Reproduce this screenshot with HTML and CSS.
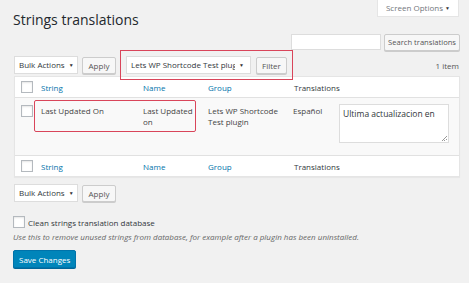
FILE: index.html
```html
<!DOCTYPE html>
<html>
<head>
<meta charset="utf-8">
<link rel="stylesheet" href="styles.css">
</head>
<body>
<div class="page">
  <div class="screen-meta">
    <div class="screen-options">Screen Options <span class="caret">▼</span></div>
  </div>
  <h1 class="title">Strings translations</h1>
  <div class="search-box">
    <div class="search-input"></div>
    <div class="btn">Search translations</div>
  </div>
  <div class="tablenav top">
    <div class="actions">
      <div class="select bulk">Bulk Actions <span class="caret">▼</span></div>
      <div class="btn">Apply</div>
      <div class="filter-group">
        <div class="select group-select"><span class="sel-text">Lets WP Shortcode Test plugin</span> <span class="caret">▼</span></div>
        <div class="btn">Filter</div>
      </div>
    </div>
    <div class="count">1 item</div>
  </div>
  <div class="table">
    <div class="row head">
      <div class="c-cb"><span class="cb"></span></div>
      <div class="c-string link">String</div>
      <div class="c-name link">Name</div>
      <div class="c-group link">Group</div>
      <div class="c-trans">Translations</div>
    </div>
    <div class="row body">
      <div class="c-cb"><span class="cb"></span></div>
      <div class="c-string">Last Updated On</div>
      <div class="c-name">Last Updated on</div>
      <div class="c-group">Lets WP Shortcode Test plugin</div>
      <div class="c-trans trans-cell">
        <span class="lang">Español</span>
        <div class="textarea">Ultima actualizacion en<span class="grip"></span></div>
      </div>
      <div class="row-mark"></div>
    </div>
    <div class="row foot">
      <div class="c-cb"><span class="cb"></span></div>
      <div class="c-string link">String</div>
      <div class="c-name link">Name</div>
      <div class="c-group link">Group</div>
      <div class="c-trans">Translations</div>
    </div>
  </div>
  <div class="tablenav bottom">
    <div class="actions">
      <div class="select bulk">Bulk Actions <span class="caret">▼</span></div>
      <div class="btn">Apply</div>
    </div>
  </div>
  <label class="clean"><span class="cb"></span>Clean strings translation database</label>
  <p class="desc">Use this to remove unused strings from database, for example after a plugin has been uninstalled.</p>
  <div class="primary">Save Changes</div>
</div>
</body>
</html>
```

FILE: styles.css
```css
html, body {
  margin: 0;
  padding: 0;
  background: #fff;
}
body {
  width: 474px;
  height: 287px;
  overflow: hidden;
  font-family: "Open Sans", sans-serif;
  font-size: 8px;
  color: #444;
}
.page {
  width: 469px;
  height: 283px;
  background: #f1f1f1;
  box-sizing: border-box;
  padding: 0 9px 0 13px;
}
.screen-meta {
  float: right;
  margin-right: 1px;
}
.screen-options {
  width: 82px;
  height: 17px;
  box-sizing: border-box;
  background: #fff;
  border: 1px solid #e5e5e5;
  border-top: 0;
  font-size: 8px;
  line-height: 16px;
  text-align: center;
  color: #72777c;
}
.caret {
  font-size: 5px;
  vertical-align: 1px;
  color: #333;
}
.title {
  margin: 0;
  padding-top: 9px;
  font-size: 14px;
  font-weight: 400;
  line-height: 22px;
  color: #23282d;
  height: 22px;
}
.search-box {
  clear: both;
  display: flex;
  justify-content: flex-end;
  gap: 3px;
  margin-top: 3px;
  height: 17px;
}
.search-input {
  width: 90px;
  height: 16px;
  background: #fff;
  border: 1px solid #ddd;
  box-sizing: border-box;
}
.btn {
  height: 17px;
  box-sizing: border-box;
  border: 1px solid #ccc;
  background: #f7f7f7;
  color: #555;
  padding: 0 5px;
  line-height: 15px;
  border-radius: 2px;
  box-shadow: 0 1px 0 #ccc;
  white-space: nowrap;
}
.search-box .btn {
  padding: 0 3px;
  font-size: 7.6px;
}
.tablenav {
  display: flex;
  justify-content: space-between;
  align-items: center;
}
.tablenav.top {
  margin-top: 5px;
  height: 18px;
}
.actions {
  display: flex;
  align-items: center;
  gap: 4px;
  padding-left: 1px;
}
.actions > .btn { width: 34px; text-align: center; padding: 0; }
.select {
  height: 18px;
  box-sizing: border-box;
  border: 1px solid #ddd;
  background: #fff;
  color: #32373c;
  line-height: 16px;
  padding: 0 4px;
  white-space: nowrap;
  display: flex;
  gap: 4px;
}
.bulk { width: 64px; }
.filter-group {
  display: flex;
  align-items: center;
  gap: 5px;
  margin-left: 6px;
  outline: 1.5px solid #d9455a;
  outline-offset: 5px;
}
.filter-group .btn { width: auto; padding: 0 5px; }
.group-select {
  width: 125px;
}
.sel-text {
  display: block;
  width: 104px;
  overflow: hidden;
}
.count {
  color: #555;
  padding-right: 1px;
}
.table {
  margin-top: 2px;
  margin-left: 1px;
  background: #fff;
  border: 1px solid #e5e5e5;
  box-shadow: 0 1px 1px rgba(0,0,0,.04);
}
.row {
  display: flex;
  position: relative;
}
.row.head, .row.foot {
  height: 20px;
  align-items: center;
}
.row.head { border-bottom: 1px solid #e1e1e1; }
.row.foot { border-top: 1px solid #e1e1e1; }
.row.body {
  background: #f9f9f9;
  height: 57px;
  align-items: flex-start;
  line-height: 11px;
  padding-top: 7px;
  box-sizing: border-box;
}
.c-cb { width: 22px; padding-left: 6px; box-sizing: border-box; }
.c-string { width: 102px; padding-left: 4px; box-sizing: border-box; }
.c-name { width: 65px; padding-left: 4px; padding-right: 6px; box-sizing: border-box; }
.c-group { width: 85px; padding-left: 4px; padding-right: 6px; box-sizing: border-box; }
.c-trans { flex: 1; padding-left: 5px; }
.row.body .c-cb { margin-top: -1px; }
.link { color: #0073aa; }
.row.head .c-trans, .row.foot .c-trans { color: #32373c; }
.cb {
  display: inline-block;
  width: 12px;
  height: 12px;
  box-sizing: border-box;
  border: 1px solid #b4b9be;
  background: #fff;
  vertical-align: middle;
  box-shadow: inset 0 1px 2px rgba(0,0,0,.1);
}
.trans-cell {
  display: flex;
  gap: 0;
  padding-left: 4px;
}
.lang { width: 46px; }
.textarea {
  position: relative;
  width: 110px;
  height: 39px;
  margin-top: -1px;
  box-sizing: border-box;
  border: 1px solid #ddd;
  background: #fff;
  color: #32373c;
  padding: 3px 3px;
  font-size: 8.5px;
}
.grip {
  position: absolute;
  right: 1px;
  bottom: 1px;
  width: 5px;
  height: 5px;
  background: linear-gradient(135deg, transparent 45%, #999 45%, #999 55%, transparent 55%, transparent 70%, #999 70%, #999 80%, transparent 80%);
}
.row-mark {
  position: absolute;
  left: 19px;
  top: 2px;
  width: 162px;
  height: 32px;
  box-sizing: border-box;
  border: 1.5px solid #d9455a;
  border-radius: 2px;
}
.tablenav.bottom {
  margin-top: 7px;
  height: 18px;
}
.clean {
  display: flex;
  align-items: center;
  gap: 3px;
  margin-top: 14px;
  color: #32373c;
  height: 12px;
}
.desc {
  margin: 3px 0 0;
  font-style: italic;
  color: #666;
  font-size: 8px;
  line-height: 11px;
}
.primary {
  display: inline-block;
  margin-top: 8px;
  height: 18px;
  box-sizing: border-box;
  padding: 0 5px;
  line-height: 17px;
  background: #0085ba;
  border: 1px solid #0073aa;
  border-radius: 2px;
  color: #fff;
  box-shadow: 0 1px 0 #006799;
}
```
